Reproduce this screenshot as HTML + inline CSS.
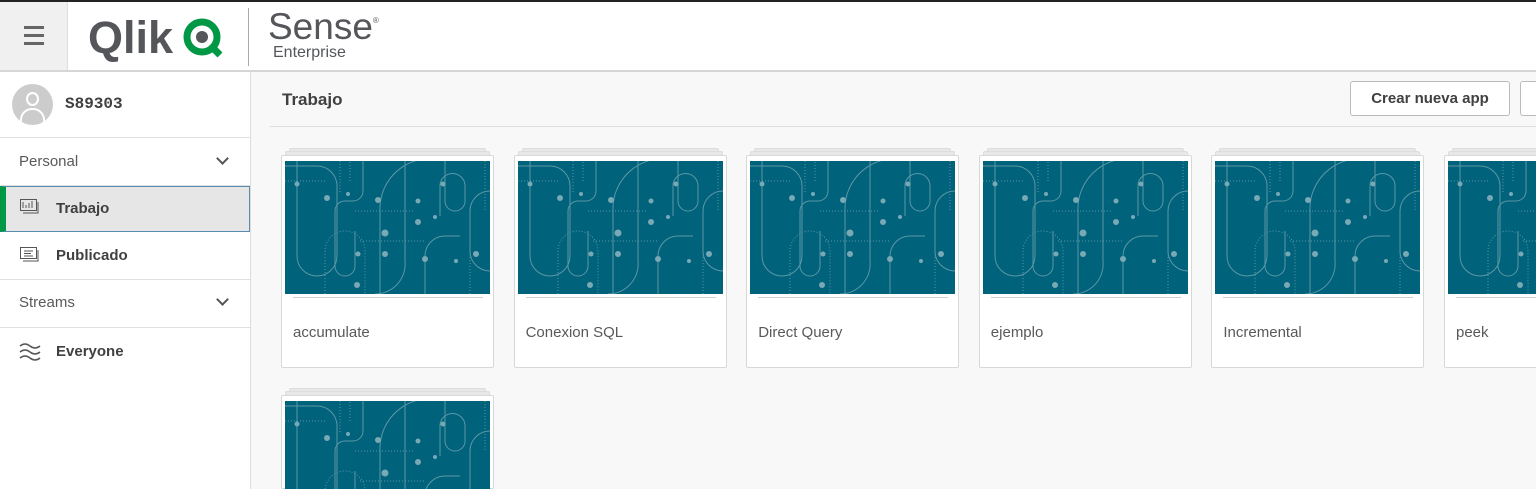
<!DOCTYPE html>
<html style="width:1536px;height:489px;overflow:hidden"><head><meta charset="utf-8"><style>
*{box-sizing:border-box;margin:0;padding:0}
body{width:1536px;height:489px;overflow:hidden;background:#f8f8f8;font-family:"Liberation Sans",sans-serif;position:relative;color:#404040}
.top{position:absolute;left:0;top:0;width:1536px;height:72px;background:#fff;border-top:2px solid #222;border-bottom:2px solid #d6d6d6}
.ham{position:absolute;left:0;top:0;width:68px;height:68px;background:#f0f0f0;border-right:1px solid #ddd}
.ham i{position:absolute;left:24px;width:20px;height:3px;background:#666}
.side{position:absolute;left:0;top:72px;width:251px;height:417px;background:#fff;border-right:1px solid #ddd}
.row{position:absolute;left:0;width:250px;border-bottom:1px solid #e0e0e0}
.lbl{position:absolute;left:19px;font-size:15px;color:#595959}
.chev{position:absolute;left:218px;width:9px;height:9px;border-right:2px solid #555;border-bottom:2px solid #555;transform:rotate(45deg)}
.item{position:absolute;left:56px;font-size:15px;font-weight:bold;color:#404040}
.card{position:absolute;width:213px;height:213px;background:#fff;border:1px solid #d8d8d8;border-radius:2px}
.st{position:absolute;height:5px;background:#e8e8e8;border:1px solid #ddd;border-bottom:none;border-radius:2px 2px 0 0}
.th{position:absolute;left:3px;top:5px;width:205px;height:133px;background:#00627b;overflow:hidden}
.sep{position:absolute;left:11px;top:141px;width:190px;height:1px;background:#d0d0d0}
.nm{position:absolute;left:11px;top:168px;font-size:15px;color:#595959}
#cards{position:absolute;left:0;top:0;width:1536px;height:489px;overflow:hidden}
</style></head><body>
<svg width="0" height="0" style="position:absolute"><defs><symbol id="p" viewBox="0 0 205 133">
<g fill="none" stroke="#5c97a6" stroke-width="1">
<path d="M12 0V95a20 20 0 0 0 40 0V25a20 20 0 0 0-20-20H0"/>
<path d="M78 0V30a10 10 0 0 1-10 10H60a10 10 0 0 0-10 10V105a10 10 0 0 0 20 0V70"/>
<path d="M95 133V50a50 50 0 0 1 65-50"/>
<path d="M120 0V100a30 30 0 0 1-30 33"/>
<path d="M140 133V95a20 20 0 0 1 20-20H175"/>
<path d="M160 0V40a10 10 0 0 0 20 0V25a12 12 0 0 0-25 0V55"/>
<path d="M205 30a20 20 0 0 0-20 20V90a20 20 0 0 0 20 20"/>
<path d="M40 133V90a20 20 0 0 1 40 0V133" stroke-dasharray="1 2"/>
<path d="M0 20H40M65 20V0M75 80H140M70 50H130" stroke-dasharray="1 2"/>
<path d="M55 0V33M185 133V60M200 0V50" stroke-dasharray="1 2"/>
</g>
<g fill="#78a9b5"><circle cx="12" cy="23" r="2.5"/><circle cx="42" cy="37" r="3"/><circle cx="63" cy="33" r="2"/><circle cx="93" cy="39" r="3"/><circle cx="133" cy="40" r="2.5"/><circle cx="133" cy="61" r="3"/><circle cx="100" cy="72" r="3.5"/><circle cx="100" cy="93" r="3"/><circle cx="73" cy="93" r="2.5"/><circle cx="140" cy="98" r="3"/><circle cx="158" cy="23" r="2.5"/><circle cx="150" cy="56" r="2"/><circle cx="171" cy="100" r="2"/><circle cx="191" cy="93" r="3"/><circle cx="72" cy="124" r="3"/></g>
</symbol></defs></svg>
<div class="top">
<div class="ham"><i style="top:24px"></i><i style="top:32px"></i><i style="top:40px"></i></div>
<div style="position:absolute;left:88px;top:10px;font-size:45px;font-weight:bold;color:#54565a;letter-spacing:0px">Qlik</div>
<svg style="position:absolute;left:183px;top:15px" width="48" height="42" viewBox="0 0 48 42"><circle cx="19" cy="20" r="15" fill="none" stroke="#009845" stroke-width="7"/><circle cx="19" cy="20" r="6" fill="#54565a"/><path d="M27 28l10 10" stroke="#009845" stroke-width="7"/></svg>
<div style="position:absolute;left:248px;top:6px;width:1px;height:58px;background:#aaa"></div>
<div style="position:absolute;left:268px;top:4px;font-size:37px;color:#54565a">Sense<sup style="font-size:8px;vertical-align:top;position:relative;top:10px">®</sup></div>
<div style="position:absolute;left:273px;top:42px;font-size:16px;color:#54565a">Enterprise</div>
</div>
<div class="side">
<div class="row" style="top:0;height:66px">
<div style="position:absolute;left:12px;top:12px;width:41px;height:41px;border-radius:50%;background:#ccc;overflow:hidden"><div style="position:absolute;left:14px;top:8px;width:13px;height:14px;border-radius:50%;border:2px solid #fff"></div><div style="position:absolute;left:8px;top:24px;width:25px;height:20px;border-radius:12px 12px 0 0;border:2px solid #fff"></div></div>
<div style="position:absolute;left:65px;top:23px;font-family:'Liberation Mono',monospace;font-weight:bold;font-size:16px;color:#404040">S89303</div></div>
<div class="row" style="top:66px;height:48px"><span class="lbl" style="top:15px">Personal</span><i class="chev" style="top:16px"></i></div>
<div style="position:absolute;left:0;top:114px;width:250px;height:46px;background:#e6e6e6;border:1px solid #5a8cb0;border-left:6px solid #009845"></div>
<svg style="position:absolute;left:19px;top:126px" width="22" height="18"><rect x="1.5" y="1.5" width="16" height="11" fill="none" stroke="#555"/><path d="M4 4v6M7 7v3M10 5v5M13 3v7M19 4v11H4" stroke="#555" fill="none"/></svg>
<span class="item" style="top:128px">Trabajo</span>
<svg style="position:absolute;left:19px;top:174px" width="22" height="18"><rect x="1.5" y="1.5" width="16" height="11" fill="none" stroke="#555"/><path d="M5 5h9M5 7.5h7M5 10h9M19 4v11H4" stroke="#555" fill="none"/></svg>
<span class="item" style="top:175px">Publicado</span>
<div class="row" style="top:160px;height:48px"></div>
<div class="row" style="top:208px;height:48px"><span class="lbl" style="top:14px">Streams</span><i class="chev" style="top:15px"></i></div>
<svg style="position:absolute;left:19px;top:270px" width="22" height="20"><path d="M1 4q5-4 10 0t10 0M1 10q5-4 10 0t10 0M1 16q5-4 10 0t10 0" stroke="#555" fill="none" stroke-width="1.5"/></svg>
<span class="item" style="top:271px">Everyone</span>
</div>
<div style="position:absolute;left:282px;top:90px;font-size:17px;font-weight:bold;color:#404040">Trabajo</div>
<div style="position:absolute;left:270px;top:126px;width:1266px;height:1px;background:#ddd"></div>
<div style="position:absolute;left:1350px;top:81px;width:160px;height:35px;border:1px solid #bbb;border-radius:3px;background:#fff;font-size:15px;font-weight:bold;text-align:center;line-height:33px;color:#404040">Crear nueva app</div>
<div style="position:absolute;left:1520px;top:81px;width:16px;height:35px;border:1px solid #bbb;border-right:none;border-radius:3px 0 0 3px;background:#fff"></div>
<div id="cards"></div>
<script>
var n=["accumulate","Conexion SQL","Direct Query","ejemplo","Incremental","peek",""],h="";
n.forEach(function(t,i){var x=i<6?281+i*232.6:281,y=i<6?155:395;
h+='<div class="st" style="left:'+(x+8)+'px;top:'+(y-7)+'px;width:'+197+'px"></div><div class="st" style="left:'+(x+4)+'px;top:'+(y-4)+'px;width:'+205+'px"></div>';
h+='<div class="card" style="left:'+x+'px;top:'+y+'px;height:'+(i<6?213:94)+'px"><div class="th"><svg width="205" height="133"><use href="#p"/></svg></div>'+(i<6?'<div class="sep"></div><div class="nm">'+t+'</div>':'')+'</div>';});
document.getElementById("cards").innerHTML=h;
</script>
</body></html>
